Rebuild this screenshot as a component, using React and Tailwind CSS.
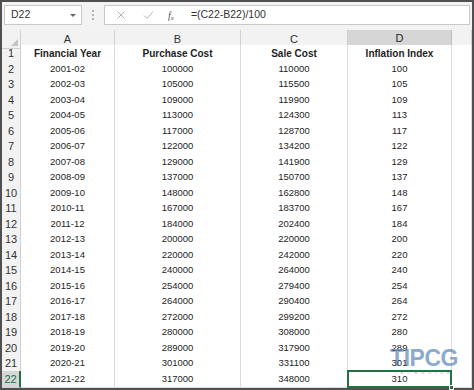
import React from "react";

const rows = [
  ["2001-02", "100000", "110000", "100"],
  ["2002-03", "105000", "115500", "105"],
  ["2003-04", "109000", "119900", "109"],
  ["2004-05", "113000", "124300", "113"],
  ["2005-06", "117000", "128700", "117"],
  ["2006-07", "122000", "134200", "122"],
  ["2007-08", "129000", "141900", "129"],
  ["2008-09", "137000", "150700", "137"],
  ["2009-10", "148000", "162800", "148"],
  ["2010-11", "167000", "183700", "167"],
  ["2011-12", "184000", "202400", "184"],
  ["2012-13", "200000", "220000", "200"],
  ["2013-14", "220000", "242000", "220"],
  ["2014-15", "240000", "264000", "240"],
  ["2015-16", "254000", "279400", "254"],
  ["2016-17", "264000", "290400", "264"],
  ["2017-18", "272000", "299200", "272"],
  ["2018-19", "280000", "308000", "280"],
  ["2019-20", "289000", "317900", "289"],
  ["2020-21", "301000", "331100", "301"],
  ["2021-22", "317000", "348000", "310"],
];

const grid = "grid grid-cols-[19px_94px_126px_107px_104px_1fr]";
const cell = "flex items-center justify-center border-r border-b border-[#dcdcdc] bg-white text-[#1e1e1e]";
const head = "flex items-center justify-center border-r border-b border-[#d0d0d0] bg-[#f2f2f2] text-[#333] text-[11px]";

const App = () => {
  return (
    <div
      className="w-[474px] h-[390px] bg-[#505050] pt-[2px] pl-[2px] pr-[2px] pb-[3px] flex flex-col overflow-hidden"
      style={{ fontFamily: '"Liberation Sans", Arial, sans-serif' }}
    >
      {/* formula bar */}
      <div className="h-[28px] bg-[#f3f3f3] flex items-start pt-[3px] pl-[2px] pr-[2px] shrink-0">
        <div className="w-[78px] h-[20px] bg-white border border-[#c8c8c8] flex items-center justify-between pl-[6px] pr-[5px] text-[10.5px] text-[#333]">
          <span>D22</span>
          <span className="w-0 h-0 border-l-[3px] border-r-[3px] border-t-[3px] border-l-transparent border-r-transparent border-t-[#666]"></span>
        </div>
        <div className="w-[22px] h-[20px] flex flex-col items-center justify-center gap-[2px]">
          <span className="w-[2px] h-[2px] bg-[#a0a0a0] rounded-full"></span>
          <span className="w-[2px] h-[2px] bg-[#a0a0a0] rounded-full"></span>
          <span className="w-[2px] h-[2px] bg-[#a0a0a0] rounded-full"></span>
        </div>
        <div className="flex-1 h-[20px] bg-white border border-[#c8c8c8] flex items-center text-[10.5px] text-[#333]">
          <svg width="10" height="10" viewBox="0 0 10 10" className="ml-[11px]">
            <path d="M1.5 1.5 L8.5 8.5 M8.5 1.5 L1.5 8.5" stroke="#b4b4b4" strokeWidth="1" />
          </svg>
          <svg width="11" height="10" viewBox="0 0 11 10" className="ml-[17px]">
            <path d="M1 5.5 L4 8.5 L10 1.5" stroke="#b4b4b4" strokeWidth="1" fill="none" />
          </svg>
          <span className="ml-[14px] italic text-[10px] text-[#555]" style={{ fontFamily: '"Liberation Serif", serif' }}>
            f<sub className="text-[7px]">x</sub>
          </span>
          <span className="ml-[17px]">=(C22-B22)/100</span>
        </div>
      </div>

      {/* sheet */}
      <div className="relative flex-1 bg-white">
        <div className={`${grid} h-[15px]`}>
          <div className={`${head} relative`}>
            <svg width="7" height="7" viewBox="0 0 7 7" className="absolute right-[2px] bottom-[2px]">
              <path d="M7 0 L7 7 L0 7 Z" fill="#c4c4c4" />
            </svg>
          </div>
          <div className={head}>A</div>
          <div className={head}>B</div>
          <div className={head}>C</div>
          <div className="flex items-center justify-center border-r border-[#c0c0c0] border-b-2 border-b-[#217346] bg-[#d6d6d6] text-[#222] text-[11px]">D</div>
          <div className={head}></div>
        </div>

        <div className={`${grid} h-[15.5px] text-[10px] font-bold`}>
          <div className={`${head} font-normal`}>1</div>
          <div className={cell}>Financial Year</div>
          <div className={cell}>Purchase Cost</div>
          <div className={cell}>Sale Cost</div>
          <div className={cell}>Inflation Index</div>
          <div className={cell}></div>
        </div>

        {rows.map((r, i) => {
          const n = i + 2;
          const last = n === 22;
          return (
            <div key={n} className={`${grid} h-[15.5px] text-[9.5px]`}>
              {last ? (
                <div className="flex items-center justify-center border-b border-[#d0d0d0] border-r-2 border-r-[#217346] bg-[#d6d6d6] text-[#217346] text-[11px]">
                  {n}
                </div>
              ) : (
                <div className={head}>{n}</div>
              )}
              <div className={cell}>{r[0]}</div>
              <div className={cell}>{r[1]}</div>
              <div className={cell}>{r[2]}</div>
              <div className={`${cell} relative`}>
                {r[3]}
                {last && (
                  <>
                    <span className="absolute inset-[-1px] border-2 border-[#217346]"></span>
                    <span className="absolute right-[-3px] bottom-[-3px] w-[5px] h-[5px] bg-[#217346] border border-white"></span>
                  </>
                )}
              </div>
              <div className={cell}></div>
            </div>
          );
        })}

        {/* watermark */}
        <div className="absolute left-[385px] top-[317px] w-[74px] flex flex-col items-center pointer-events-none opacity-60">
          <span className="text-[23px] font-bold leading-none tracking-[-0.5px] text-[#3f74ad]">TIPCG</span>
          <span className="text-[4px] leading-none tracking-[4px] text-[#4f6f90] mt-[1px]">TECHGUIDE</span>
        </div>
      </div>
    </div>
  );
};

export default App;
